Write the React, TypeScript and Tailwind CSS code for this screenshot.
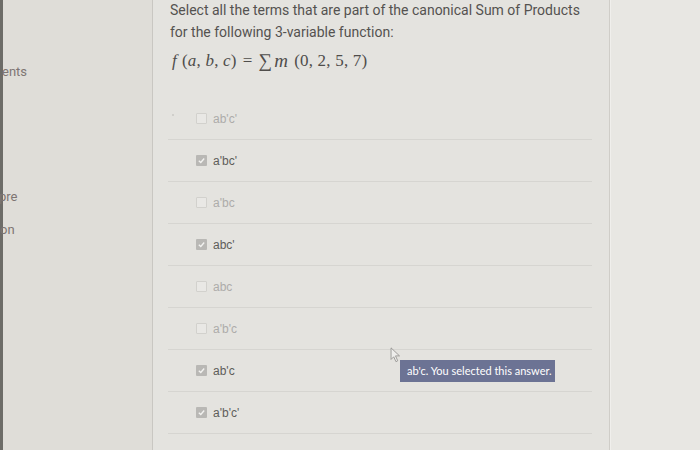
import React from "react";

type Option = { label: string; checked: boolean };

const OPTIONS: Option[] = [
  { label: "ab'c'", checked: false },
  { label: "a'bc'", checked: true },
  { label: "a'bc", checked: false },
  { label: "abc'", checked: true },
  { label: "abc", checked: false },
  { label: "a'b'c", checked: false },
  { label: "ab'c", checked: true },
  { label: "a'b'c'", checked: true },
];

function Box({ checked }: { checked: boolean }) {
  if (!checked) {
    return <span className="block h-[11px] w-[11px] rounded-[1px] border border-[#d2d1cd] bg-[#e9e8e5]" />;
  }
  return (
    <span className="flex h-[11px] w-[11px] items-center justify-center rounded-[1px] bg-[#b9b8b5]">
      <svg viewBox="0 0 10 10" className="h-[9px] w-[9px]">
        <path d="M2 5.2 L4.2 7.2 L8 2.8" fill="none" stroke="#f2f2f0" strokeWidth="1.5" />
      </svg>
    </span>
  );
}

export default function App() {
  return (
    <div
      className="flex h-[450px] w-[700px] overflow-hidden bg-[#e4e3df] text-[#4b4a48]"
      style={{ fontFamily: "Roboto, 'Noto Sans', sans-serif" }}
    >
      <aside className="relative w-[153px] shrink-0 border-l-[3px] border-r border-l-[#6d6c68] border-r-[#c9c7c2] bg-[#dfddd8] text-[13px] text-[#7e7573]">
        <div className="-ml-[1px] mt-[63px] leading-[18px]">ents</div>
        <div className="-ml-[4px] mt-[107px] leading-[18px]">pre</div>
        <div className="-ml-[3px] mt-[15px] leading-[18px]">on</div>
      </aside>

      <main className="relative w-[457px] shrink-0 border-r border-[#cfcdc8] pl-[17px]">
        <p className="-mt-[1px] whitespace-nowrap text-[14px] leading-[22px] text-[#545250]">
          Select all the terms that are part of the canonical Sum of Products
        </p>
        <p className="mt-[1px] text-[14px] leading-[21px] text-[#545250]">for the following 3-variable function:</p>
        <div
          className="mt-[7px] flex items-center pl-[2px] text-[17px] leading-[22px] tracking-[0.2px] text-[#4f4d4b]"
          style={{ fontFamily: "'Liberation Serif', 'DejaVu Serif', serif" }}
        >
          <span className="italic">f</span>
          <span className="ml-[5px]">(</span>
          <span className="italic">a</span>
          <span>,&nbsp;</span>
          <span className="italic">b</span>
          <span>,&nbsp;</span>
          <span className="italic">c</span>
          <span>)</span>
          <span className="mx-[6px]">=</span>
          <span className="text-[19px]">∑</span>
          <span className="ml-[2px] italic text-[19px]">m</span>
          <span className="ml-[6px]">(0,&nbsp;2,&nbsp;5,&nbsp;7)</span>
        </div>

        <div className="-ml-[2px] mt-[26px] w-[424px]">
          {OPTIONS.map((o, i) => (
            <div key={i} className="relative flex h-[42px] items-center border-b border-[#d6d5d1] pl-[28px]">
              {i === 0 && <span className="absolute left-[4px] top-[16px] h-[2px] w-[2px] bg-[#d0cfcb]" />}
              <Box checked={o.checked} />
              <span
                className={`ml-[6px] text-[12px] ${o.checked ? "text-[#5e5d5a]" : "text-[#adacaa]"}`}
                style={{ fontFamily: "Arial, 'Liberation Sans', sans-serif" }}
              >
                {o.label}
              </span>
              {i === 6 && (
                <>
                  <svg viewBox="0 0 12 18" className="absolute left-[222px] top-[-3px] h-[16px] w-[11px]">
                    <path d="M1 1 L1 14 L4 11 L6.5 16.5 L8.5 15.5 L6 10 L10.5 10 Z" fill="#eeeeec" stroke="#8d8c89" strokeWidth="0.9" />
                  </svg>
                  <div
                    className="absolute left-[232px] top-[10px] flex h-[22px] w-[155px] items-center bg-[#6c7394] pl-[7px] text-[11px] text-white"
                    style={{ fontFamily: "Lato, 'Open Sans', sans-serif" }}
                  >
                    ab'c. You selected this answer.
                  </div>
                </>
              )}
            </div>
          ))}
        </div>
      </main>

      <section className="flex-1 border-l border-[#f0efec] bg-[#e8e7e3]" />
    </div>
  );
}
